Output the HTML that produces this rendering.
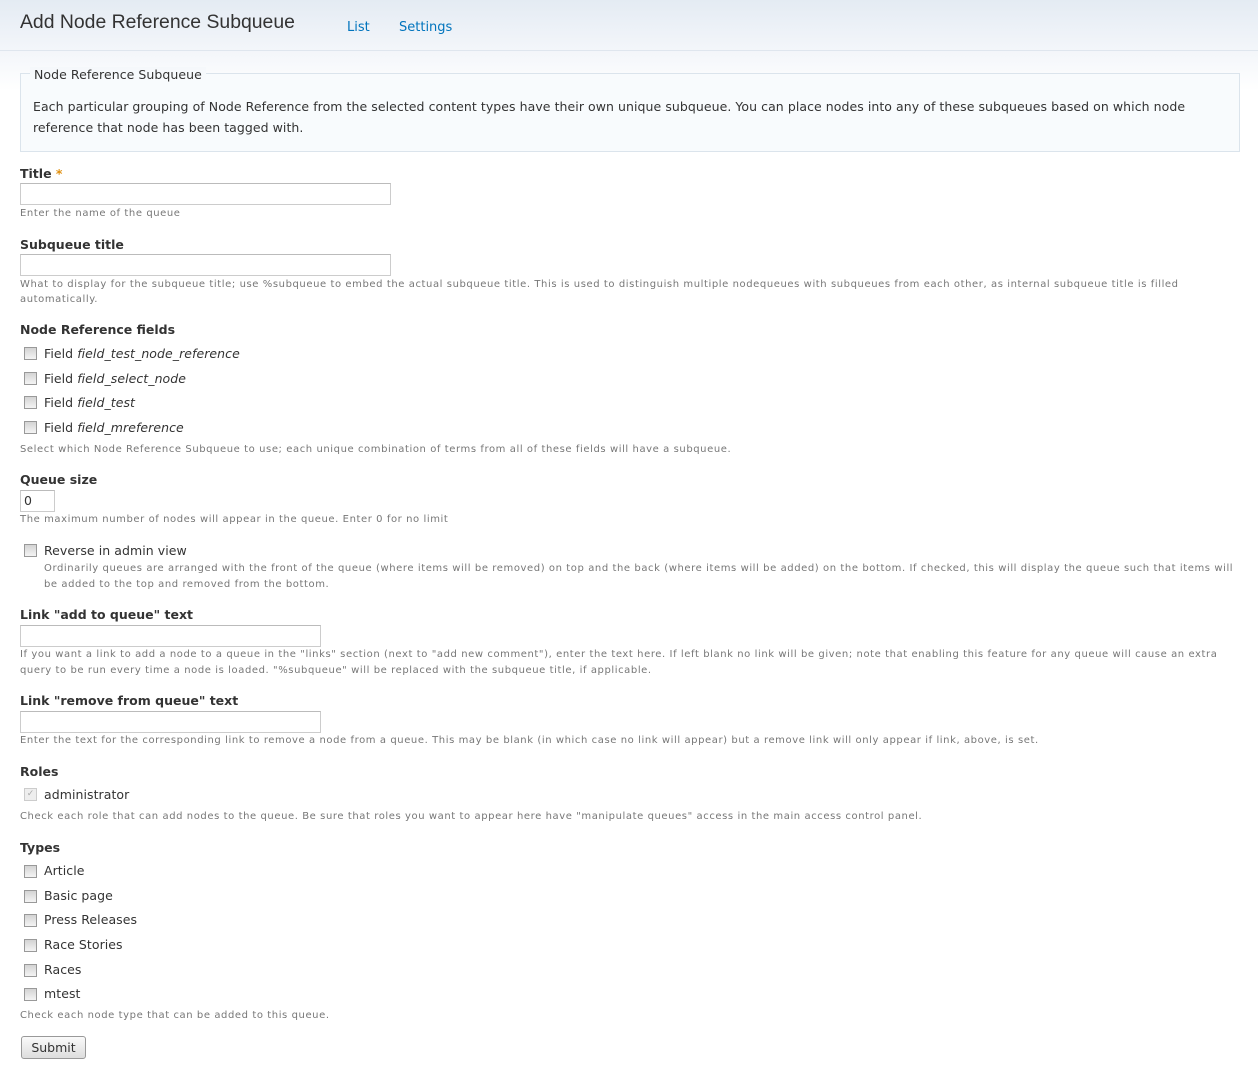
<!DOCTYPE html>
<html><head><meta charset="utf-8"><style>
body{margin:0;width:1258px;height:1067px;background:#fff;font-family:"DejaVu Sans","Liberation Sans",sans-serif;color:#333;position:relative;overflow:hidden}
.hdr{position:absolute;left:0;top:0;width:1258px;height:50px;background:linear-gradient(#e4ebf3,#f3f6fa);border-bottom:1px solid #dfe6ee}
.bg2{position:absolute;left:0;top:51px;width:1258px;height:40px;background:linear-gradient(#f3f6fa,#fff)}
.a{position:absolute;white-space:nowrap}
h1{position:absolute;left:20px;top:11px;margin:0;font:19.4px "Liberation Sans",sans-serif;color:#333}
.tab{font:13px "DejaVu Sans",sans-serif;color:#0074bd;top:20px}
.fs{position:absolute;left:20px;top:73px;width:1218px;height:77px;border:1px solid #dbe4ec;background:#f8fbfd}
.lab{font-weight:bold;font-size:12.5px;color:#333}
.d{font-size:10px;color:#777;letter-spacing:0.58px}
.t{font-size:12.5px;color:#333;letter-spacing:0.06px}
.in{position:absolute;border:1px solid #ccc;border-top-color:#bbb;background:#fff;height:20px}
.cb{position:absolute;left:24px;width:11px;height:11px;border:1px solid #999;background:linear-gradient(#d4d4d4,#f4f4f4)}
.btn{position:absolute;left:21px;top:1036px;width:63px;height:21px;border:1px solid #999;border-radius:3px;background:linear-gradient(#fafafa,#ddd);font-size:12.5px;text-align:center;line-height:21px;color:#333}
</style></head><body>
<div class="hdr"></div><div class="bg2"></div>
<h1>Add Node Reference Subqueue</h1>
<div class="a tab" style="left:347px">List</div>
<div class="a tab" style="left:399px">Settings</div>
<div class="fs"></div>
<div class="a t" style="left:30px;top:67px;background:linear-gradient(#f5f8fb,#f8fbfd);padding:0 4px">Node Reference Subqueue</div>
<div class="a t" style="left:33px;top:99px">Each particular grouping of Node Reference from the selected content types have their own unique subqueue. You can place nodes into any of these subqueues based on which node</div>
<div class="a t" style="left:33px;top:120px">reference that node has been tagged with.</div>

<div class="a lab" style="left:20px;top:166px">Title <span style="color:#e09010">*</span></div>
<div class="in" style="left:20px;top:183px;width:369px"></div>
<div class="a d" style="left:20px;top:208px">Enter the name of the queue</div>

<div class="a lab" style="left:20px;top:237px">Subqueue title</div>
<div class="in" style="left:20px;top:254px;width:369px"></div>
<div class="a d" style="left:20px;top:279px">What to display for the subqueue title; use %subqueue to embed the actual subqueue title. This is used to distinguish multiple nodequeues with subqueues from each other, as internal subqueue title is filled</div>
<div class="a d" style="left:20px;top:294px">automatically.</div>

<div class="a lab" style="left:20px;top:322px">Node Reference fields</div>
<div class="cb" style="top:347px"></div><div class="a t" style="left:44px;top:346px">Field <i>field_test_node_reference</i></div>
<div class="cb" style="top:372px"></div><div class="a t" style="left:44px;top:371px">Field <i>field_select_node</i></div>
<div class="cb" style="top:396px"></div><div class="a t" style="left:44px;top:395px">Field <i>field_test</i></div>
<div class="cb" style="top:421px"></div><div class="a t" style="left:44px;top:420px">Field <i>field_mreference</i></div>
<div class="a d" style="left:20px;top:444px">Select which Node Reference Subqueue to use; each unique combination of terms from all of these fields will have a subqueue.</div>

<div class="a lab" style="left:20px;top:472px">Queue size</div>
<div class="in" style="left:20px;top:490px;width:33px"></div>
<div class="a t" style="left:24px;top:493px">0</div>
<div class="a d" style="left:20px;top:514px">The maximum number of nodes will appear in the queue. Enter 0 for no limit</div>

<div class="cb" style="top:544px"></div><div class="a t" style="left:44px;top:543px">Reverse in admin view</div>
<div class="a d" style="left:44px;top:563px">Ordinarily queues are arranged with the front of the queue (where items will be removed) on top and the back (where items will be added) on the bottom. If checked, this will display the queue such that items will</div>
<div class="a d" style="left:44px;top:579px">be added to the top and removed from the bottom.</div>

<div class="a lab" style="left:20px;top:607px">Link "add to queue" text</div>
<div class="in" style="left:20px;top:625px;width:299px"></div>
<div class="a d" style="left:20px;top:649px">If you want a link to add a node to a queue in the "links" section (next to "add new comment"), enter the text here. If left blank no link will be given; note that enabling this feature for any queue will cause an extra</div>
<div class="a d" style="left:20px;top:665px">query to be run every time a node is loaded. "%subqueue" will be replaced with the subqueue title, if applicable.</div>

<div class="a lab" style="left:20px;top:693px">Link "remove from queue" text</div>
<div class="in" style="left:20px;top:711px;width:299px"></div>
<div class="a d" style="left:20px;top:735px">Enter the text for the corresponding link to remove a node from a queue. This may be blank (in which case no link will appear) but a remove link will only appear if link, above, is set.</div>

<div class="a lab" style="left:20px;top:764px">Roles</div>
<div class="cb" style="top:788px;border-color:#ccc;background:#eee;font-size:9px;color:#aaa;line-height:11px;text-align:center">✓</div><div class="a t" style="left:44px;top:787px">administrator</div>
<div class="a d" style="left:20px;top:811px">Check each role that can add nodes to the queue. Be sure that roles you want to appear here have "manipulate queues" access in the main access control panel.</div>

<div class="a lab" style="left:20px;top:840px">Types</div>
<div class="cb" style="top:865px"></div><div class="a t" style="left:44px;top:863px">Article</div>
<div class="cb" style="top:890px"></div><div class="a t" style="left:44px;top:888px">Basic page</div>
<div class="cb" style="top:914px"></div><div class="a t" style="left:44px;top:912px">Press Releases</div>
<div class="cb" style="top:939px"></div><div class="a t" style="left:44px;top:937px">Race Stories</div>
<div class="cb" style="top:964px"></div><div class="a t" style="left:44px;top:962px">Races</div>
<div class="cb" style="top:988px"></div><div class="a t" style="left:44px;top:986px">mtest</div>
<div class="a d" style="left:20px;top:1010px">Check each node type that can be added to this queue.</div>
<div class="btn">Submit</div>
</body></html>
